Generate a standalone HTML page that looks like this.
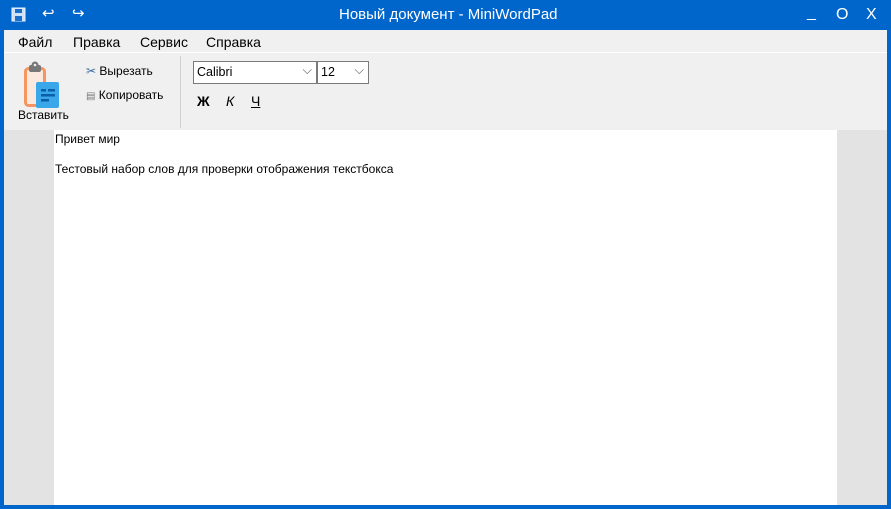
<!DOCTYPE html>
<html><head><meta charset="utf-8"><style>
*{margin:0;padding:0;box-sizing:border-box}
body{width:891px;height:509px;background:#0066cc;position:relative;overflow:hidden;font-family:"Segoe UI","Liberation Sans","DejaVu Sans",sans-serif}
.abs{position:absolute}
.title{left:0;top:0;width:891px;height:30px;color:#fff;font-size:15px}
.menu{left:4px;top:30px;width:883px;height:22px;background:#f0f0f0;font-size:14px;color:#000}
.menu span{position:absolute;top:4px}
.tb{left:4px;top:52px;width:883px;height:78px;background:#f0f0f0;border-top:1px solid #fff}
.main{left:4px;top:130px;width:883px;height:375px;background:#e3e3e3}
.page{left:54px;top:130px;width:783px;height:375px;background:#fff;font-size:12px;color:#000}
.box{background:#fff;border:1px solid #7a7a7a;height:23px;font-size:12.5px;padding:3px 0 0 3px}
</style></head><body>
<div class="abs title">
<svg class="abs" style="left:11px;top:7px" width="16" height="16" viewBox="0 0 16 16"><rect x="1" y="1" width="13" height="13" fill="#cfe3f7" stroke="#e8f1fb"/><rect x="4" y="2" width="7" height="4" fill="#1b6fc9"/><rect x="4" y="9" width="7" height="5" fill="#1b6fc9"/></svg>
<div class="abs" style="left:42px;top:4px;font-size:15px">↩</div>
<div class="abs" style="left:72px;top:4px;font-size:15px">↪</div>
<div class="abs" style="left:339px;top:6px;font-size:15px">Новый документ - MiniWordPad</div>
<div class="abs" style="left:807px;top:4px;font-size:16px">_</div>
<div class="abs" style="left:836px;top:6px;font-size:16px">O</div>
<div class="abs" style="left:866px;top:6px;font-size:16px">X</div>
</div>
<div class="abs menu"><span style="left:14px">Файл</span><span style="left:69px">Правка</span><span style="left:136px">Сервис</span><span style="left:202px">Справка</span></div>
<div class="abs tb">
<svg class="abs" style="left:16px;top:8px" width="44" height="50" viewBox="0 0 44 50"><rect x="5.5" y="7.5" width="19" height="37" rx="3" fill="#fbe9df" stroke="#f59662" stroke-width="3"/><rect x="9" y="4" width="12" height="7" rx="2" fill="#777"/><circle cx="15" cy="4" r="3.5" fill="#777"/><circle cx="15" cy="4" r="1.3" fill="#f0f0f0"/><rect x="16" y="21" width="23" height="26" rx="2" fill="#3aa7ea"/><rect x="21" y="28" width="5" height="2.5" fill="#0b5ea8"/><rect x="28" y="28" width="7" height="2.5" fill="#0b5ea8"/><rect x="21" y="33" width="14" height="2.5" fill="#0b5ea8"/><rect x="21" y="38" width="8" height="2.5" fill="#0b5ea8"/></svg>
<div class="abs" style="left:14px;top:55px;font-size:12px">Вставить</div>
<div class="abs" style="left:82px;top:11px;font-size:12px"><span style="color:#3a6e9a">✂</span> Вырезать</div>
<div class="abs" style="left:82px;top:35px;font-size:12px"><span style="color:#777;font-size:10px">▤</span> Копировать</div>
<div class="abs" style="left:176px;top:3px;width:1px;height:72px;background:#d0d0d0"></div>
<div class="abs box" style="left:189px;top:8px;width:124px">Calibri<span class="abs" style="right:4px;top:1px;color:#555">⌵</span></div>
<div class="abs box" style="left:313px;top:8px;width:52px">12<span class="abs" style="right:4px;top:1px;color:#555">⌵</span></div>
<div class="abs" style="left:193px;top:40px;font-size:14px;font-weight:bold">Ж</div>
<div class="abs" style="left:222px;top:40px;font-size:14px;font-style:italic">К</div>
<div class="abs" style="left:247px;top:40px;font-size:14px;text-decoration:underline">Ч</div>
</div>
<div class="abs main"></div>
<div class="abs page"><div class="abs" style="left:1px;top:2px">Привет мир</div><div class="abs" style="left:1px;top:32px">Тестовый набор слов для проверки отображения текстбокса</div></div>
</body></html>
